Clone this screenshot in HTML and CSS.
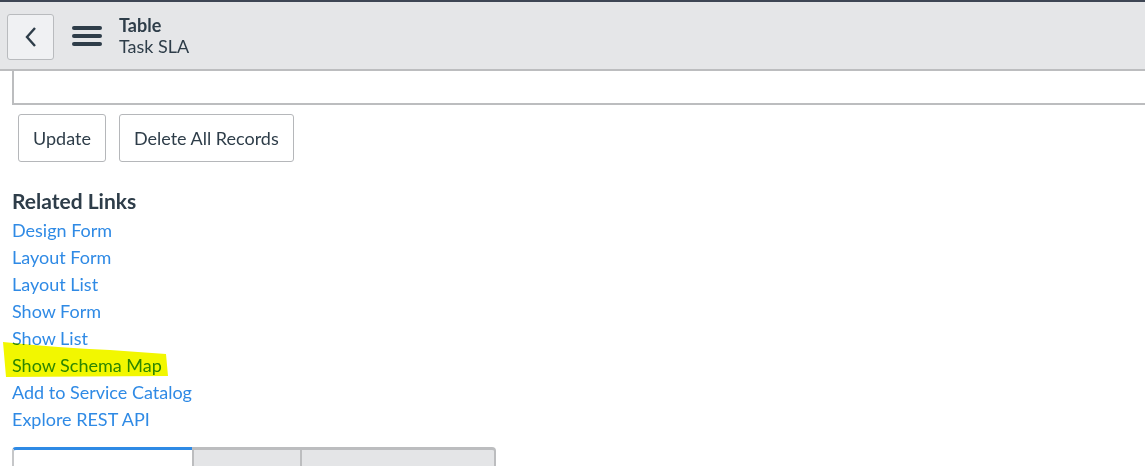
FILE: index.html
```html
<!DOCTYPE html>
<html>
<head>
<meta charset="utf-8">
<link rel="stylesheet" href="styles.css">
</head>
<body>
<header class="topbar">
  <button class="back" aria-label="Back">
    <svg width="16" height="22" viewBox="0 0 16 22"><path d="M12 2 L4 11 L12 20" fill="none" stroke="#2e3d49" stroke-width="2.4"/></svg>
  </button>
  <div class="burger"><span></span><span></span><span></span></div>
  <div class="titles">
    <div class="t1">Table</div>
    <div class="t2">Task SLA</div>
  </div>
</header>
<main class="content">
  <div class="field"></div>
  <div class="actions">
    <button class="btn">Update</button>
    <button class="btn">Delete All Records</button>
  </div>
  <h2 class="rl-title">Related Links</h2>
  <ul class="links">
    <li><a>Design Form</a></li>
    <li><a>Layout Form</a></li>
    <li><a>Layout List</a></li>
    <li><a>Show Form</a></li>
    <li><a>Show List</a></li>
    <li><a>Show Schema Map</a></li>
    <li><a>Add to Service Catalog</a></li>
    <li><a>Explore REST API</a></li>
  </ul>
  <div class="tabs">
    <div class="tab active"></div>
    <div class="tab t2w"></div>
    <div class="tab t3w"></div>
  </div>
  <svg class="highlight" width="170" height="40" viewBox="0 0 170 40"><path d="M3 0 Q60 6 110 8 L166 12 L168 34 L6 35 Z" fill="#f2f700"/></svg>
</main>
</body>
</html>
```
FILE: styles.css
```css
* { box-sizing: border-box; }
html, body { margin: 0; padding: 0; background: #fff; overflow: hidden; }
body { font-family: "Lato", "Open Sans", sans-serif; color: #2e3d49; width: 1145px; height: 466px; }
.topbar {
  height: 71px;
  background: #e5e6e8;
  border-top: 2px solid #3e4654;
  border-bottom: 2px solid #bcbdbf;
  display: flex;
  align-items: center;
  padding-left: 7px;
}
.back {
  width: 47px; height: 46px;
  border: 1px solid #b9bbbe;
  border-radius: 3px;
  background: #f0f1f3;
  display: flex; align-items: center; justify-content: center;
  padding: 0;
  margin-top: 2px;
}
.burger {
  margin-left: 18px;
  width: 30px;
  display: flex; flex-direction: column; gap: 4px;
}
.burger span { display: block; height: 4px; background: #2e3d49; border-radius: 2px; }
.titles { margin-left: 17px; line-height: 21px; margin-top: 1px; }
.t1 { font-weight: 700; font-size: 18px; }
.t2 { font-size: 18px; }
.content { position: relative; padding-left: 12px; }
.field {
  height: 34px;
  border-left: 2px solid #bcbdbf;
  border-bottom: 2px solid #bcbdbf;
  margin-right: -10px;
}
.actions { display: flex; gap: 13px; margin-top: 9px; padding-left: 6px; }
.btn {
  font-family: inherit;
  font-size: 18px;
  color: #2e3d49;
  background: #fff;
  border: 1px solid #b5b7ba;
  border-radius: 3px;
  height: 48px;
  padding: 0 14px;
  line-height: 44px;
}
.rl-title { font-size: 21px; font-weight: 700; margin: 26px 0 0; line-height: 26px; }
.links { list-style: none; margin: 3px 0 0; padding: 0; }
.links li { line-height: 27px; height: 27px; font-size: 18px; }
.links a { color: #2f8ae5; }
.tabs { display: flex; margin-top: 14px; height: 20px; }
.tab { height: 20px; border-top: 3px solid #bcbdbf; background: #e4e5e7; border-left: 2px solid #bcbdbf; }
.tab.active { width: 180px; background: #fff; border-top-color: #2f8ae5; border-left-color: #c6c7c9; border-top-left-radius: 4px; }
.t2w { width: 108px; }
.t3w { width: 196px; border-right: 2px solid #bcbdbf; border-top-right-radius: 4px; }
.highlight { position: absolute; left: 0; top: 271px; mix-blend-mode: multiply; pointer-events: none; }
```
